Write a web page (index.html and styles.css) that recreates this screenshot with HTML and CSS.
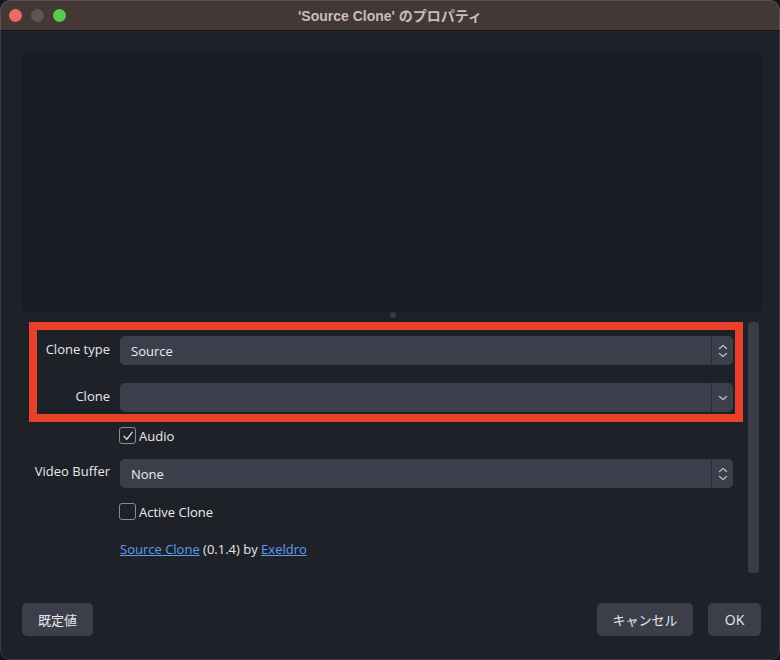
FILE: index.html
```html
<!DOCTYPE html>
<html lang="ja">
<head>
<meta charset="utf-8">
<title>'Source Clone' のプロパティ</title>
<link rel="stylesheet" href="styles.css">
</head>
<body>
<div class="window">
  <div class="titlebar">
    <div class="lights">
      <span class="light red"></span>
      <span class="light gray"></span>
      <span class="light green"></span>
    </div>
    <div class="title">'Source Clone' のプロパティ</div>
  </div>
  <div class="content">
    <div class="preview"></div>
    <div class="splitter"><span class="dot"></span></div>
    <div class="props">
      <div class="form">
        <div class="group">
          <div class="row">
            <span class="label">Clone type</span>
            <div class="combo">
              <span class="value">Source</span>
              <span class="combo-btn">
                <svg width="10" height="16" viewBox="0 0 10 16"><path d="M1.5 5.5 L5 2.5 L8.5 5.5 M1.5 10.5 L5 13.5 L8.5 10.5" fill="none" stroke="#b9bac0" stroke-width="1.3" stroke-linecap="round" stroke-linejoin="round"/></svg>
              </span>
            </div>
          </div>
          <div class="row row-gap">
            <span class="label">Clone</span>
            <div class="combo">
              <span class="value"></span>
              <span class="combo-btn">
                <svg width="10" height="16" viewBox="0 0 10 16"><path d="M1.5 6.5 L5 9.5 L8.5 6.5" fill="none" stroke="#b9bac0" stroke-width="1.4" stroke-linecap="round" stroke-linejoin="round"/></svg>
              </span>
            </div>
          </div>
        </div>
        <div class="row plain check-row first-check">
          <span class="label"></span>
          <span class="checkbox">
            <svg width="14" height="14" viewBox="0 0 14 14"><path d="M3 7.3 L5.8 10.2 L11.2 3.4" fill="none" stroke="#d4d4d8" stroke-width="1.4" stroke-linecap="round" stroke-linejoin="round"/></svg>
          </span>
          <span class="check-text">Audio</span>
        </div>
        <div class="row plain field-row">
          <span class="label label-top">Video Buffer</span>
          <div class="combo">
            <span class="value">None</span>
            <span class="combo-btn">
              <svg width="10" height="16" viewBox="0 0 10 16"><path d="M1.5 5.5 L5 2.5 L8.5 5.5 M1.5 10.5 L5 13.5 L8.5 10.5" fill="none" stroke="#b9bac0" stroke-width="1.3" stroke-linecap="round" stroke-linejoin="round"/></svg>
            </span>
          </div>
        </div>
        <div class="row plain check-row second-check">
          <span class="label"></span>
          <span class="checkbox"></span>
          <span class="check-text">Active Clone</span>
        </div>
        <div class="row plain link-row">
          <span class="label"></span>
          <span class="credit"><a class="link">Source Clone</a> (0.1.4) by <a class="link">Exeldro</a></span>
        </div>
      </div>
      <div class="scrollbar"></div>
    </div>
    <div class="footer">
      <button class="btn btn-default">既定値</button>
      <div class="footer-right">
        <button class="btn btn-cancel">キャンセル</button>
        <button class="btn btn-ok">OK</button>
      </div>
    </div>
  </div>
</div>
</body>
</html>
```

FILE: styles.css
```css
* { box-sizing: border-box; }

html, body {
  margin: 0;
  padding: 0;
  background: #17171a;
  width: 780px;
  height: 660px;
  overflow: hidden;
}

body {
  font-family: "Open Sans", "Noto Sans CJK JP", sans-serif;
  font-size: 13px;
  color: #e6e6ea;
}

.window {
  position: relative;
  width: 780px;
  height: 660px;
  background: #1f2129;
  border-radius: 10px;
  overflow: hidden;
  display: flex;
  flex-direction: column;
}

.window::after {
  content: "";
  position: absolute;
  inset: 0;
  border-radius: 10px;
  border: 1px solid rgba(255, 255, 255, 0.13);
  pointer-events: none;
}

.titlebar {
  position: relative;
  height: 31px;
  flex: none;
  background: #433836;
  border-bottom: 1px solid #161415;
  display: flex;
  align-items: center;
  justify-content: center;
}

.lights {
  position: absolute;
  left: 9px;
  top: 9px;
  display: flex;
  gap: 9px;
}

.light {
  width: 13px;
  height: 13px;
  border-radius: 50%;
}
.light.red { background: #ed6a5e; }
.light.gray { background: #5e5654; }
.light.green { background: #5bc84f; }

.title {
  font-family: "Liberation Sans", "Noto Sans CJK JP", sans-serif;
  font-weight: bold;
  font-size: 14px;
  color: #c6bebb;
  margin-top: -1px;
}

.content {
  flex: 1;
  padding: 20px 18px 0 22px;
  display: flex;
  flex-direction: column;
}

.preview {
  height: 260px;
  background: #1b1d24;
  flex: none;
}

.splitter {
  height: 11px;
  flex: none;
  display: flex;
  justify-content: center;
  padding-top: 1px;
}

.dot {
  width: 6px;
  height: 6px;
  border-radius: 50%;
  background: #3a3c45;
  margin-left: 2px;
}

.props {
  height: 251px;
  flex: none;
  display: flex;
  margin-left: 7px;
  margin-right: 3px;
  gap: 5px;
}

.form {
  width: 714px;
  flex: none;
}

.scrollbar {
  width: 11px;
  height: 251px;
  background: #393b47;
  border-radius: 3px;
}

.group {
  border: 8px solid #e8412b;
  padding: 6px 2px 2px 0;
}

.row {
  display: flex;
  align-items: center;
}

.row.plain {
  padding-left: 8px;
  padding-right: 10px;
}

.row-gap { margin-top: 18px; }

.label {
  width: 73px;
  flex: none;
  display: flex;
  justify-content: flex-end;
  margin-right: 10px;
  white-space: nowrap;
  color: #e8e8ec;
  margin-top: -3px;
}

.label-top {
  align-self: flex-start;
  margin-top: 3px;
}

.combo {
  flex: 1;
  height: 29px;
  background: #3c3e4b;
  border-radius: 5px;
  display: flex;
  align-items: stretch;
  overflow: hidden;
}

.value {
  flex: 1;
  padding-left: 11px;
  display: flex;
  align-items: center;
  color: #ececf0;
}

.combo-btn {
  width: 22px;
  flex: none;
  border-left: 1px solid #2a2c35;
  display: flex;
  align-items: center;
  justify-content: center;
}

.check-row { height: 17px; }
.first-check { margin-top: 5px; }
.second-check { margin-top: 15px; }
.field-row { margin-top: 15px; }

.check-row .label, .link-row .label { margin-top: 0; }

.checkbox {
  width: 17px;
  height: 17px;
  flex: none;
  border: 1.5px solid #8b8b91;
  border-radius: 3px;
  margin-left: -1px;
  display: flex;
  align-items: center;
  justify-content: center;
}

.check-text {
  margin-left: 3px;
  color: #ececf0;
}

.link-row {
  margin-top: 20px;
  height: 18px;
}

.credit { color: #e6e6ea; }

.link {
  color: #5d9ff4;
  text-decoration: underline;
}

.footer {
  margin-top: 30px;
  display: flex;
  justify-content: space-between;
  align-items: flex-start;
  margin-right: 1px;
}

.footer-right {
  display: flex;
  gap: 15px;
}

.btn {
  height: 33px;
  border: none;
  border-radius: 5px;
  background: #3c3e4b;
  color: #e8e8ec;
  font-family: "Open Sans", "Noto Sans CJK JP", sans-serif;
  font-size: 13px;
  padding: 0;
}

.btn-default { width: 71px; font-family: "Noto Sans CJK JP", sans-serif; }
.btn-cancel { width: 96px; font-family: "Noto Sans CJK JP", sans-serif; }
.btn-ok { width: 53px; font-size: 14px; }
```
